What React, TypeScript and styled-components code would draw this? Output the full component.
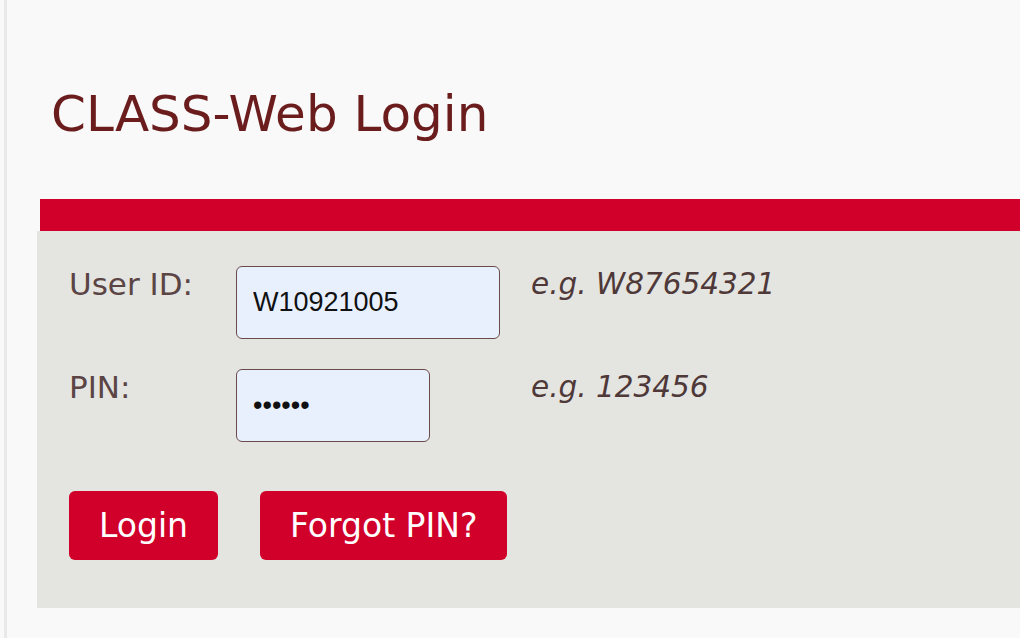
import React from 'react';
import styled, { createGlobalStyle } from 'styled-components';

const GlobalStyle = createGlobalStyle`
  html, body {
    margin: 0;
    padding: 0;
    background: #f9f9f9;
  }
  body {
    font-family: 'DejaVu Sans', 'Noto Sans', sans-serif;
    overflow: hidden;
  }
`;

const Page = styled.div`
  margin-left: 4px;
  min-height: 638px;
  border-left: 3px solid #e9e9e9;
  padding-left: 30px;
  box-sizing: border-box;
`;

const Heading = styled.h1`
  margin: 0 0 56px 14px;
  padding-top: 86px;
  font-size: 50px;
  line-height: 57px;
  font-weight: 400;
  color: #6b1d1d;
`;

const Card = styled.section`
  display: flex;
  flex-direction: column;
`;

const Bar = styled.div`
  height: 32px;
  margin-left: 3px;
  background: #d0002b;
`;

const Panel = styled.form`
  background: #e4e4e0;
  padding: 35px 0 48px 32px;
`;

const Fields = styled.div`
  display: grid;
  grid-template-columns: 136px 264px auto;
  column-gap: 31px;
  row-gap: 30px;
  align-items: start;
`;

const Label = styled.label`
  font-size: 31px;
  line-height: 36px;
  color: #5a4444;
`;

const Input = styled.input<{ $width: number }>`
  box-sizing: border-box;
  width: ${(p) => p.$width}px;
  height: 73px;
  padding: 0 16px;
  border: 1.5px solid #6a4a4a;
  border-radius: 6px;
  background: #e8f0fe;
  font-family: 'Liberation Sans', Arial, sans-serif;
  font-size: 27px;
  color: #111;
  outline: none;
`;

const Hint = styled.span`
  font-size: 29.5px;
  line-height: 36px;
  font-style: italic;
  color: #4e3838;
`;

const Actions = styled.div`
  display: flex;
  gap: 42px;
  margin-top: 49px;
`;

const Button = styled.button`
  height: 69px;
  padding: 0 30px;
  border: none;
  border-radius: 6px;
  background: #d0002b;
  color: #fff;
  font-family: 'DejaVu Sans', 'Noto Sans', sans-serif;
  font-size: 33px;
  cursor: pointer;
`;

export default function App() {
  return (
    <>
      <GlobalStyle />
      <Page>
        <Heading>CLASS-Web Login</Heading>
        <Card>
          <Bar />
          <Panel onSubmit={(e) => e.preventDefault()}>
            <Fields>
              <Label htmlFor="uid">User ID:</Label>
              <Input id="uid" $width={264} defaultValue="W10921005" />
              <Hint>e.g. W87654321</Hint>
              <Label htmlFor="pin">PIN:</Label>
              <Input id="pin" type="password" $width={194} defaultValue="123456" />
              <Hint>e.g. 123456</Hint>
            </Fields>
            <Actions>
              <Button type="submit">Login</Button>
              <Button type="button">Forgot PIN?</Button>
            </Actions>
          </Panel>
        </Card>
      </Page>
    </>
  );
}
